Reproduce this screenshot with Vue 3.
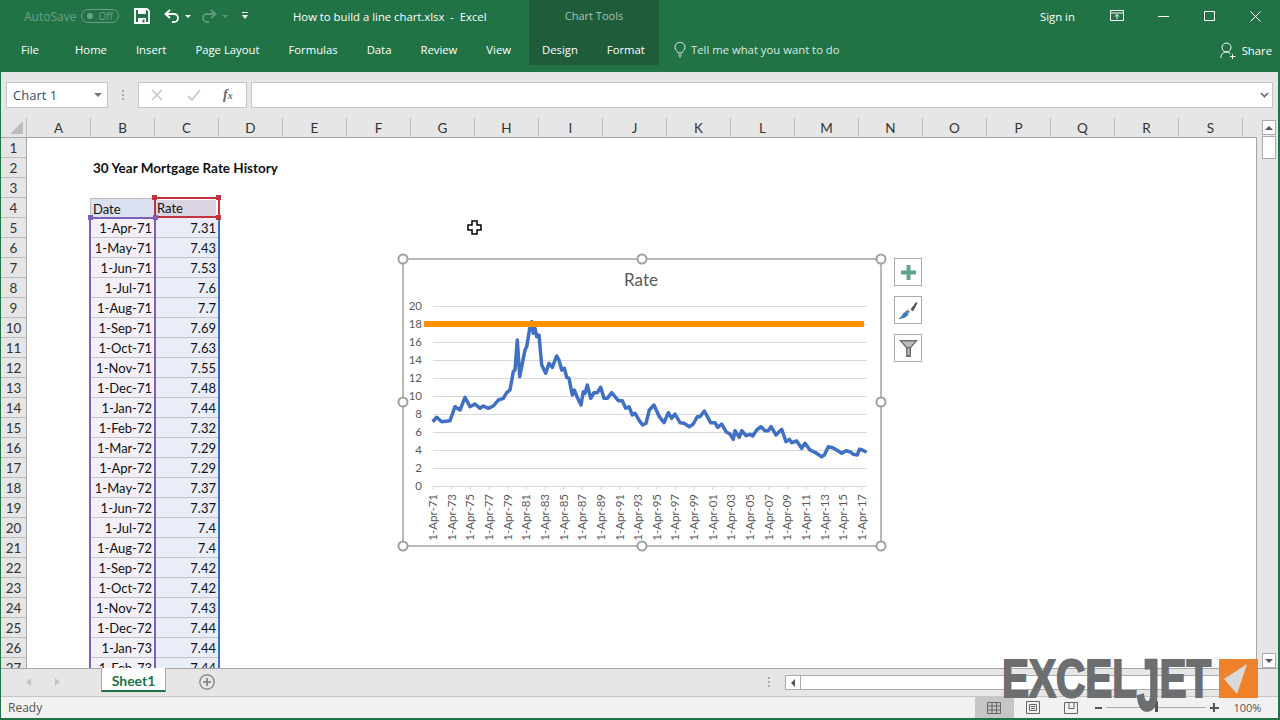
<script setup>
const tabs = ['Home', 'Insert', 'Page Layout', 'Formulas', 'Data', 'Review', 'View']
const columns = 'ABCDEFGHIJKLMNOPQRS'.split('')
const rowNumbers = Array.from({ length: 27 }, (_, i) => i + 1)

const rows = [
  ['1-Apr-71', '7.31'], ['1-May-71', '7.43'], ['1-Jun-71', '7.53'], ['1-Jul-71', '7.6'],
  ['1-Aug-71', '7.7'], ['1-Sep-71', '7.69'], ['1-Oct-71', '7.63'], ['1-Nov-71', '7.55'],
  ['1-Dec-71', '7.48'], ['1-Jan-72', '7.44'], ['1-Feb-72', '7.32'], ['1-Mar-72', '7.29'],
  ['1-Apr-72', '7.29'], ['1-May-72', '7.37'], ['1-Jun-72', '7.37'], ['1-Jul-72', '7.4'],
  ['1-Aug-72', '7.4'], ['1-Sep-72', '7.42'], ['1-Oct-72', '7.42'], ['1-Nov-72', '7.43'],
  ['1-Dec-72', '7.44'], ['1-Jan-73', '7.44'], ['1-Feb-73', '7.44']
]

// chart coordinates are page pixels, the svg viewBox starts at 395,250
const gridLines = Array.from({ length: 11 }, (_, i) => ({ y: 486 - i * 18, label: i * 2 }))
const years = ['71', '73', '75', '77', '79', '81', '83', '85', '87', '89', '91', '93', '95', '97', '99', '01', '03', '05', '07', '09', '11', '13', '15', '17']
const ticks = years.map((year, i) => ({ year, x: 433 + i * 18.65 }))

const scale = (ox, oy, list) => list.map(([x, y]) => `${(ox + x / 3).toFixed(1)},${(oy + y / 3).toFixed(1)}`)
const line = [
  ...scale(395, 400, [[113, 65], [125, 52], [140, 65], [165, 62]]),
  ...scale(395, 250, [[180, 470], [195, 480], [210, 442], [225, 470], [240, 462], [255, 475], [265, 468], [280, 475], [295, 468], [310, 450], [325, 445], [335, 428], [345, 420], [355, 365], [360, 360], [367, 270], [374, 380], [390, 300], [395, 290], [405, 230], [410, 215], [415, 250], [420, 235], [425, 260], [432, 255], [440, 345], [452, 370], [462, 340], [472, 352], [485, 318], [492, 330], [500, 360], [508, 355], [515, 382], [522, 385], [532, 435], [538, 420], [548, 445], [558, 465], [565, 425], [570, 430], [577, 405], [587, 445], [597, 428], [607, 428], [617, 412], [627, 445], [637, 445], [650, 428], [660, 440], [670, 452], [682, 452], [692, 475], [702, 470]]),
  ...scale(395, 400, [[712, 45], [720, 40], [735, 65]]),
  ...scale(640, 400, [[8, 75], [18, 70], [28, 30], [42, 15], [58, 50], [72, 68], [85, 38], [95, 55], [105, 42], [120, 68], [132, 70], [148, 80], [160, 72], [172, 50], [180, 50], [193, 33], [212, 68], [225, 68], [233, 82], [245, 72], [258, 95], [270, 102], [280, 118], [285, 92], [298, 112], [305, 92], [318, 107], [330, 103], [338, 108], [350, 90], [363, 80], [375, 92], [385, 92], [393, 80], [408, 105], [425, 88], [438, 125], [448, 118], [455, 128], [470, 123], [485, 145], [495, 130], [510, 150], [525, 157], [545, 170], [553, 165], [565, 140], [578, 143], [590, 150], [605, 160], [618, 152], [630, 155], [640, 163], [652, 165], [658, 148], [667, 150], [680, 157]])
].join(' ')

const handles = [[403, 259], [642, 259], [881, 259], [403, 402], [881, 402], [403, 546], [642, 546], [881, 546]]
</script>

<template>
  <div class="app">
    <div class="title-row">
      <div class="qat">
        <span class="autosave">AutoSave</span>
        <span class="toggle"><i></i>Off</span>
        <svg class="save" width="16" height="16" viewBox="0 0 16 16">
          <path d="M1 1h12l2 2v12H1z" fill="none" stroke="#fff" stroke-width="1.8" />
          <path d="M4 1h8v5H4zM4 10h8v5H4z" fill="#fff" />
          <path d="M8.500 11.500h2v3h-2z" fill="#217346" />
        </svg>
        <svg class="undo" width="16" height="14" viewBox="0 0 16 14">
          <path d="M6 1 1.500 5 6 9M2 5h8a4 4 0 0 1 0 8H8" fill="none" stroke="#fff" stroke-width="1.8" />
        </svg>
        <span class="caret"></span>
        <svg class="redo" width="16" height="14" viewBox="0 0 16 14">
          <path d="M10 1l4.500 4L10 9M14 5H6a4 4 0 0 0 0 8h2" fill="none" stroke="#5c9a7b" stroke-width="1.800" />
        </svg>
        <span class="caret dim"></span>
        <svg class="custom" width="6" height="8" viewBox="0 0 6 8">
          <path d="M0 0h6v1H0zM0 3h6L3 7z" fill="#fff" />
        </svg>
      </div>
      <div class="doc-title">How to build a line chart.xlsx &nbsp;-&nbsp; Excel</div>
      <div class="tool-title">Chart Tools</div>
      <div class="window-side">
        <span class="signin">Sign in</span>
        <svg class="win-display" width="14" height="12" viewBox="0 0 14 12">
          <path d="M.5.500h13v10H.5zM.5 3h13M7 9V4.500M5 6.500l2-2 2 2" fill="none" stroke="#fff" />
        </svg>
        <svg class="win-min" width="11" height="11" viewBox="0 0 11 11"><path d="M0 5.500h11" stroke="#fff" /></svg>
        <svg class="win-max" width="11" height="11" viewBox="0 0 11 11"><path d="M.5.500h10v9H.5z" fill="none" stroke="#fff" /></svg>
        <svg class="win-close" width="11" height="11" viewBox="0 0 11 11"><path d="M.5.500l10 10M10.500.500l-10 10" stroke="#fff" /></svg>
      </div>
    </div>

    <div class="ribbon-row">
      <span class="file-tab">File</span>
      <div class="tab-list">
        <span v-for="tab in tabs" :key="tab">{{ tab }}</span>
      </div>
      <div class="tool-tabs"><span>Design</span><span>Format</span></div>
      <svg class="bulb" width="12" height="16" viewBox="0 0 12 16">
        <path d="M4 11C3.500 9 1 8 1 5.200a5 5 0 0 1 10 0C11 8 8.500 9 8 11zM4.500 13h3M5 15h2" fill="none" stroke="#dce9e2" />
      </svg>
      <span class="tell-me">Tell me what you want to do</span>
      <div class="share">
        <svg width="16" height="17" viewBox="0 0 16 17">
          <path d="M1 16c0-4 2-6 5.500-6S9.500 11 10 12M6.500 10a4.500 4.500 0 1 0 0-9 4.500 4.500 0 0 0 0 9zM12.500 12v5M10 14.500h5.500" fill="none" stroke="#fff" />
        </svg>
        <span>Share</span>
      </div>
    </div>

    <div class="formula-row">
      <div class="name-box">Chart 1<span class="name-caret"></span></div>
      <span class="grip"></span>
      <div class="fx-box">
        <svg width="12" height="12" viewBox="0 0 12 12"><path d="M1 1l10 10M11 1 1 11" stroke="#c4c4c4" stroke-width="1.500" /></svg>
        <svg width="14" height="12" viewBox="0 0 14 12"><path d="M1 7l4 4 8-10" fill="none" stroke="#c4c4c4" stroke-width="1.500" /></svg>
        <span class="fx"><em>f</em><small>x</small></span>
      </div>
      <div class="formula-input">
        <svg width="9" height="6" viewBox="0 0 9 6"><path d="M1 1l3.500 3.500L8 1" fill="none" stroke="#666" stroke-width="1.600" /></svg>
      </div>
    </div>

    <div class="work-row">
      <div class="sheet-col">
        <div class="col-heads">
          <div class="corner"><span></span></div>
          <div v-for="col in columns" :key="col" class="col-head">{{ col }}</div>
        </div>
        <div class="sheet-body">
          <div class="row-heads">
            <div v-for="n in rowNumbers" :key="n" class="row-head">{{ n }}</div>
          </div>
          <div class="cells">
            <div class="cell-grid">
              <div class="sheet-title">30 Year Mortgage Rate History</div>
              <div class="blank-row"></div>
              <div class="head-cell date-head">Date</div>
              <div class="head-cell rate-head">Rate</div>
              <template v-for="row in rows" :key="row[0]">
                <div class="cell date-cell">{{ row[0] }}</div>
                <div class="cell rate-cell">{{ row[1] }}</div>
              </template>
            </div>

            <!-- range highlights sit on top of the cells -->
            <div class="range purple"></div>
            <div class="range blue"></div>
            <div class="range red"></div>
            <i class="dot p1"></i><i class="dot p2"></i>
            <i class="dot r1"></i><i class="dot r2"></i><i class="dot r3"></i>

            <svg class="cursor" width="17" height="17" viewBox="0 0 17 17">
              <path d="M6 2h5v4h4v5h-4v4H6v-4H2V6h4z" fill="#fff" stroke="#000" stroke-width="1.500" />
            </svg>

            <svg class="chart" width="500" height="305" viewBox="395 250 500 305">
              <rect x="403" y="259" width="478" height="287" fill="#fff" stroke="#a3a3a3" stroke-width="1.500" />
              <text x="641" y="286" class="chart-title" text-anchor="middle">Rate</text>
              <g v-for="g in gridLines" :key="g.y">
                <line x1="433" x2="867" :y1="g.y + 0.5" :y2="g.y + 0.5" stroke="#d9d9d9" />
                <text x="422" :y="g.y + 4" class="axis" text-anchor="end">{{ g.label }}</text>
              </g>
              <g v-for="t in ticks" :key="t.year + t.x">
                <line :x1="t.x" :x2="t.x" y1="486" y2="490" stroke="#d9d9d9" />
                <text class="axis" text-anchor="end" :transform="`translate(${t.x + 4} 494) rotate(-90)`">1-Apr-{{ t.year }}</text>
              </g>
              <polyline :points="line" fill="none" stroke="#4070c4" stroke-width="3.500" stroke-linejoin="round" />
              <rect x="424" y="321" width="440" height="6" fill="#ff9000" />
              <circle v-for="h in handles" :key="h.join()" :cx="h[0]" :cy="h[1]" r="4.500" fill="#fff" stroke="#a0a0a0" stroke-width="2" />
            </svg>

            <div class="chart-buttons">
              <button>
                <svg width="15" height="15" viewBox="0 0 15 15"><path d="M5.500 0h4v5.500H15v4H9.500V15h-4V9.500H0v-4h5.500z" fill="#5fa58a" /></svg>
              </button>
              <button>
                <svg width="20" height="19" viewBox="0 0 20 19">
                  <path d="M12.500 8.500 18 1l1.500 1-4.500 8.500z" fill="#595959" />
                  <path d="M0 18c3-1 4-4.500 6-6.500 1.500-1 4-.5 4.500 1 0 3-5.500 5.500-10.500 5.500z" fill="#3f78b8" />
                  <path d="M7 11l2.500-2.500 2.500 2-1 1.500z" fill="#888" />
                </svg>
              </button>
              <button>
                <svg width="19" height="17" viewBox="0 0 19 17"><path d="M0 0h19l-7 8v9H7V8z" fill="#6e6e6e" /><path d="M8.500 8.500h2V15h-2zM3 1.500h13L11 7H8z" fill="#bdbdbd" /></svg>
              </button>
            </div>
          </div>
        </div>
      </div>

      <div class="v-scroll">
        <div class="sb-btn up"><span></span></div>
        <div class="sb-thumb"></div>
        <div class="sb-space"></div>
        <div class="sb-btn down"><span></span></div>
      </div>
    </div>

    <div class="tabs-row">
      <span class="nav-arrow left"></span>
      <span class="nav-arrow right"></span>
      <div class="sheet-tab">Sheet1</div>
      <span class="add-sheet">
        <svg width="16" height="16" viewBox="0 0 16 16">
          <circle cx="8" cy="8" r="7.200" fill="none" stroke="#7b7b7b" stroke-width="1.200" />
          <path d="M8 4v8M4 8h8" stroke="#7b7b7b" stroke-width="1.600" />
        </svg>
      </span>
      <span class="h-grip"></span>
      <div class="h-scroll">
        <span class="h-btn"><i></i></span>
        <span class="h-thumb"></span>
      </div>
    </div>

    <div class="status-row">
      <span class="ready">Ready</span>
      <div class="views">
        <span class="view active">
          <svg width="14" height="12" viewBox="0 0 14 12"><path d="M.5.500h13v11H.5zM.5 4h13M.5 8h13M5 .5v11M9.500.5v11" fill="none" stroke="#666" /></svg>
        </span>
        <span class="view">
          <svg width="14" height="13" viewBox="0 0 14 13"><path d="M.5.500h13v12H.5zM3.500 3.500h7v6h-7zM5 5.500h4M5 7.500h4" fill="none" stroke="#666" /></svg>
        </span>
        <span class="view">
          <svg width="14" height="12" viewBox="0 0 14 12"><path d="M.5.500h13v11H.5zM5 .5v6h5v-6" fill="none" stroke="#666" /></svg>
        </span>
      </div>
      <div class="zoom-ctl">
        <span class="zoom-minus"></span>
        <span class="zoom-track"><i></i></span>
        <span class="zoom-plus"></span>
      </div>
      <span class="zoom-pct">100%</span>
    </div>

    <!-- watermark over the bottom right corner -->
    <div class="logo">
      <span class="logo-text">EXCEL<span class="logo-j">J</span>ET</span>
      <svg width="39" height="39" viewBox="0 0 39 39">
        <rect width="39" height="39" fill="#f0812b" />
        <path d="M28 5 5 20l13 15z" fill="#d9d9d9" />
      </svg>
    </div>
  </div>
</template>

<style>
html,
body {
  margin: 0;
  background: #217346;
}
</style>

<style scoped>
.app {
  position: relative;
  width: 1280px;
  height: 720px;
  box-sizing: border-box;
  padding: 0 2px 2px 1px;
  background: #217346;
  overflow: hidden;
  display: flex;
  flex-direction: column;
  font-family: "Open Sans", "Noto Sans", sans-serif;
  font-size: 11.300px;
  color: #fff;
}

/* title bar */
.title-row {
  height: 36px;
  box-sizing: border-box;
  padding-bottom: 4px;
  display: flex;
  align-items: center;
}

.qat {
  width: 292px;
  display: flex;
  align-items: center;
  padding-left: 23px;
  box-sizing: border-box;
}

.autosave {
  width: 57px;
  color: #6ba287;
  font-size: 12px;
}

.toggle {
  width: 38px;
  height: 14px;
  border: 1px solid #6ba287;
  border-radius: 8px;
  box-sizing: border-box;
  display: flex;
  align-items: center;
  justify-content: flex-end;
  padding-right: 5px;
  color: #6ba287;
  font-size: 10px;
  position: relative;
}

.toggle i {
  position: absolute;
  left: 5px;
  top: 3px;
  width: 6px;
  height: 6px;
  border-radius: 50%;
  background: #6ba287;
}

.save {
  margin-left: 15px;
}

.undo {
  margin-left: 14px;
}

.caret {
  width: 0;
  height: 0;
  margin-left: 5px;
  border: 3px solid transparent;
  border-top: 3px solid #fff;
  border-bottom: 0;
}

.caret.dim {
  border-top-color: #5c9a7b;
}

.redo {
  margin-left: 10px;
}

.custom {
  margin-left: 14px;
}

.doc-title {
  width: 236px;
  white-space: nowrap;
}

.tool-title {
  width: 130px;
  height: 36px;
  margin-bottom: -4px;
  line-height: 32px;
  text-align: center;
  background: #1e5c3a;
  color: #a7c4b4;
  font-size: 11px;
}

.window-side {
  flex: 1;
  display: flex;
  align-items: center;
  padding-left: 381px;
}

.signin {
  width: 70px;
  white-space: nowrap;
}

.win-min {
  margin-left: 34px;
}

.win-max {
  margin-left: 35px;
}

.win-close {
  margin-left: 35px;
}

/* ribbon tabs */
.ribbon-row {
  height: 36px;
  display: flex;
  align-items: flex-start;
  line-height: 28px;
  white-space: nowrap;
}

.file-tab {
  width: 74px;
  padding-left: 20px;
  box-sizing: border-box;
}

.tab-list {
  width: 454px;
  display: flex;
  gap: 29px;
}

.tool-tabs {
  width: 130px;
  height: 29px;
  background: #1e5c3a;
  display: flex;
  gap: 29px;
  padding-left: 13px;
  box-sizing: border-box;
}

.bulb {
  margin: 6px 0 0 15px;
}

.tell-me {
  margin-left: 5px;
  color: #dce9e2;
}

.share {
  margin-left: auto;
  padding-right: 6px;
  display: flex;
  align-items: center;
  gap: 6px;
  height: 29px;
}

/* formula bar */
.formula-row {
  height: 46px;
  box-sizing: border-box;
  padding: 10px 5px 10px 5px;
  background: #e6e6e6;
  display: flex;
  color: #444;
}

.name-box,
.fx-box,
.formula-input {
  background: #fff;
  border: 1px solid #c6c6c6;
  box-sizing: border-box;
  height: 26px;
}

.name-box {
  width: 102px;
  padding-left: 6px;
  line-height: 24px;
  font-size: 13px;
  color: #3d4a5c;
  position: relative;
}

.name-caret {
  position: absolute;
  right: 5px;
  top: 10px;
  border: 4px solid transparent;
  border-top: 4px solid #777;
  border-bottom: 0;
}

.grip {
  width: 2px;
  height: 10px;
  margin: 8px 14px 0 14px;
  background: repeating-linear-gradient(#aaa 0 2px, transparent 2px 4px);
}

.fx-box {
  width: 109px;
  display: flex;
  align-items: center;
  gap: 24px;
  padding-left: 12px;
}

.fx {
  font-family: "Liberation Serif", serif;
  font-size: 14px;
  font-weight: bold;
  color: #666;
  margin-left: -2px;
}

.fx small {
  font-size: 10px;
  font-style: italic;
}

.formula-input {
  margin-left: 4px;
  flex: 1;
  display: flex;
  align-items: center;
  justify-content: flex-end;
  padding-right: 3px;
}

/* sheet */
.work-row {
  height: 550px;
  display: flex;
  background: #e6e6e6;
}

.sheet-col {
  width: 1256px;
  display: flex;
  flex-direction: column;
}

.col-heads {
  height: 20px;
  display: flex;
  box-sizing: border-box;
  border-bottom: 1px solid #a6a6a6;
}

.corner {
  width: 26px;
  border-right: 1px solid #bdbdbd;
  box-sizing: border-box;
  position: relative;
}

.corner span {
  position: absolute;
  right: 3px;
  bottom: 3px;
  border-style: solid;
  border-width: 0 0 13px 13px;
  border-color: transparent transparent #bdbdbd transparent;
}

.col-head {
  width: 64px;
  box-sizing: border-box;
  border-right: 1px solid #bdbdbd;
  text-align: center;
  color: #333;
  font-family: Lato, sans-serif;
  font-size: 13.500px;
  line-height: 20px;
}

.sheet-body {
  height: 530px;
  display: flex;
  overflow: hidden;
}

.row-heads {
  width: 26px;
  flex-shrink: 0;
}

.row-head {
  height: 20px;
  box-sizing: border-box;
  border-bottom: 1px solid #bdbdbd;
  border-right: 1px solid #a6a6a6;
  text-align: center;
  color: #333;
  font-family: Lato, sans-serif;
  font-size: 13.500px;
  line-height: 20px;
}

.cells {
  flex: 1;
  position: relative;
  background: #fff;
  border-right: 1px solid #a6a6a6;
  overflow: hidden;
  font-family: Lato, sans-serif;
  font-size: 13px;
  color: #111;
}

.cell-grid {
  display: grid;
  grid-template-columns: 64px 64px;
  grid-auto-rows: 20px;
  margin: 20px 0 0 63px;
}

.sheet-title {
  grid-column: 1 / 3;
  padding-left: 3px;
  line-height: 20px;
  font-size: 13.500px;
  font-weight: bold;
  white-space: nowrap;
}

.blank-row {
  grid-column: 1 / 3;
}

.head-cell {
  box-sizing: border-box;
  padding-left: 3px;
  line-height: 20px;
}

.date-head {
  background: #dae2f1;
  border: 1px solid #bfbfbf;
  border-width: 1px 0 0 1px;
  padding-left: 2px;
}

.rate-head {
  background: #dbd4e2;
  margin: 2px;
  padding-left: 1px;
  line-height: 17px;
}

.cell {
  text-align: right;
  padding-right: 2px;
  line-height: 20px;
  border-bottom: 1px solid #c4c4c8;
  box-sizing: border-box;
}

.date-cell {
  background: #f4f0f8;
}

.rate-cell {
  background: #e9edf8;
}

.range {
  position: absolute;
  box-sizing: border-box;
  pointer-events: none;
}

.range.purple {
  left: 62px;
  top: 79px;
  width: 67px;
  height: 460px;
  border: 2px solid #7f5fbc;
}

.range.blue {
  left: 191px;
  top: 80px;
  width: 2px;
  height: 460px;
  background: #3f6fc6;
}

.range.red {
  left: 127px;
  top: 59px;
  width: 66px;
  height: 21px;
  border: 2px solid #c2333f;
}

.dot {
  position: absolute;
  width: 5px;
  height: 5px;
}

.p1 { left: 61px; top: 77px; background: #7f5fbc; }
.p2 { left: 126px; top: 77px; background: #7f5fbc; }
.r1 { left: 125px; top: 57px; background: #c2333f; }
.r2 { left: 189px; top: 57px; background: #c2333f; }
.r3 { left: 189px; top: 77px; background: #c2333f; }

.cursor {
  position: absolute;
  left: 439px;
  top: 81px;
}

.chart {
  position: absolute;
  left: 368px;
  top: 112px;
}

.chart-title {
  font-family: Lato, sans-serif;
  font-size: 17px;
  fill: #595959;
}

.axis {
  font-family: Lato, sans-serif;
  font-size: 11.500px;
  fill: #595959;
}

.chart-buttons {
  position: absolute;
  left: 867px;
  top: 120px;
  display: flex;
  flex-direction: column;
  gap: 10px;
}

.chart-buttons button {
  width: 28px;
  height: 28px;
  padding: 0;
  background: #fff;
  border: 1px solid #ababab;
  display: flex;
  align-items: center;
  justify-content: center;
}

/* vertical scrollbar */
.v-scroll {
  flex: 1;
  display: flex;
  flex-direction: column;
  padding: 2px 2px 0 5px;
  height: 550px;
  box-sizing: border-box;
}

.sb-btn {
  height: 15px;
  background: #fff;
  border: 1px solid #ababab;
  box-sizing: border-box;
  display: flex;
  align-items: center;
  justify-content: center;
  flex-shrink: 0;
}

.sb-btn span {
  border: 4px solid transparent;
  border-bottom: 4px solid #555;
  border-top: 0;
}

.sb-btn.down span {
  border-top: 4px solid #555;
  border-bottom: 0;
}

.sb-thumb {
  height: 23px;
  background: #fff;
  border: 1px solid #ababab;
  box-sizing: border-box;
  margin-top: 1px;
}

.sb-space {
  flex: 1;
}

/* sheet tabs */
.tabs-row {
  height: 28px;
  box-sizing: border-box;
  background: #e6e6e6;
  border-top: 1px solid #a6a6a6;
  display: flex;
  align-items: flex-start;
  color: #217346;
}

.nav-arrow {
  margin-top: 9px;
  border: 4px solid transparent;
}

.nav-arrow.left {
  margin-left: 25px;
  border-right: 5px solid #c4c4c4;
  border-left: 0;
}

.nav-arrow.right {
  margin-left: 24px;
  border-left: 5px solid #c4c4c4;
  border-right: 0;
}

.sheet-tab {
  width: 65px;
  height: 24px;
  margin: -1px 0 0 41px;
  box-sizing: border-box;
  background: #fff;
  border: 1px solid #a6a6a6;
  border-top: 0;
  border-bottom: 2px solid #217346;
  text-align: center;
  font-family: Lato, sans-serif;
  font-weight: bold;
  font-size: 14px;
  line-height: 25px;
}

.add-sheet {
  margin: 5px 0 0 33px;
  height: 16px;
}

.h-grip {
  width: 2px;
  height: 10px;
  margin: 8px 0 0 553px;
  background: repeating-linear-gradient(#aaa 0 2px, transparent 2px 4px);
}

.h-scroll {
  width: 455px;
  height: 15px;
  margin: 6px 0 0 15px;
  background: #fff;
  border: 1px solid #ababab;
  box-sizing: border-box;
  display: flex;
}

.h-btn {
  width: 14px;
  border-right: 1px solid #ababab;
  display: flex;
  align-items: center;
  justify-content: center;
}

.h-btn i {
  border: 4px solid transparent;
  border-right: 4px solid #555;
  border-left: 0;
}

/* status bar */
.status-row {
  height: 22px;
  box-sizing: border-box;
  background: #f1f1f1;
  border-top: 1px solid #c6c6c6;
  display: flex;
  align-items: center;
  color: #555;
}

.ready {
  width: 974px;
  padding-left: 7px;
  box-sizing: border-box;
  font-size: 12px;
}

.views {
  display: flex;
  height: 100%;
}

.view {
  width: 38.500px;
  display: flex;
  align-items: center;
  justify-content: center;
}

.view.active {
  background: #c6c6c6;
}

.zoom-ctl {
  margin-left: 4px;
  display: flex;
  align-items: center;
}

.zoom-minus {
  width: 7px;
  height: 2px;
  background: #555;
}

.zoom-track {
  width: 100px;
  height: 1px;
  margin: 0 4px;
  background: #aaa;
  position: relative;
}

.zoom-track i {
  position: absolute;
  left: 49px;
  top: -6px;
  width: 3px;
  height: 11px;
  background: #555;
}

.zoom-plus {
  width: 9px;
  height: 2px;
  background: #555;
  position: relative;
}

.zoom-plus::after {
  content: "";
  position: absolute;
  left: 3.500px;
  top: -3.500px;
  width: 2px;
  height: 9px;
  background: #555;
}

.zoom-pct {
  margin-left: 15px;
  font-size: 11px;
}

/* logo */
.logo {
  position: absolute;
  left: 1002px;
  top: 659px;
  width: 256px;
  height: 53px;
  display: flex;
  justify-content: space-between;
  align-items: flex-start;
}

.logo-text {
  font-family: "Liberation Sans", sans-serif;
  font-weight: bold;
  font-size: 54px;
  line-height: 39px;
  color: #6d6e70;
  -webkit-text-stroke: 2px #6d6e70;
  white-space: nowrap;
  transform: scaleX(0.75);
  transform-origin: left top;
  width: 210px;
}

.logo-j {
  display: inline-block;
  transform: scaleY(1.35);
  transform-origin: top;
}
</style>
